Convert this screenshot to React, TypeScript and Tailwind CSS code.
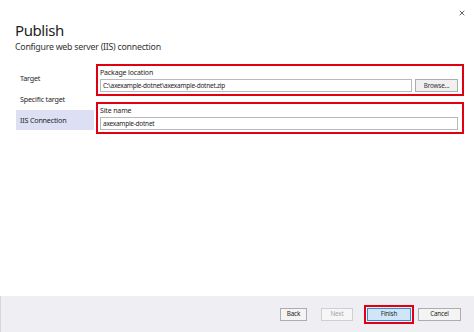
import { X } from 'lucide-react';

const navItems = ['Target', 'Specific target', 'IIS Connection'];

export default function App() {
    const font = { fontFamily: '"Noto Sans", "Open Sans", sans-serif' };

    return (
        <div className="w-[474px] h-[332px] bg-white flex flex-col overflow-hidden text-[#1e1e1e]" style={font}>
            {/* Header */}
            <div className="relative h-[62px] pl-[15px] pt-[20px]">
                <h1 className="text-[15px] leading-[20px] tracking-[-0.4px] font-normal">Publish</h1>
                <p className="text-[8.8px] leading-[12px] mt-[1px] tracking-[-0.25px] text-[#333]">Configure web server (IIS) connection</p>
                <X className="absolute right-[8px] top-[9px] text-[#444]" size={8} strokeWidth={2.5} />
            </div>

            {/* Body */}
            <div className="flex flex-1 gap-[2px] pt-[2px]">
                {/* Sidebar */}
                <div className="w-[78px] ml-[16px] flex flex-col pt-[4px]">
                    {navItems.map((item) => (
                        <div
                            key={item}
                            className={`h-[20px] pl-[4px] flex items-center text-[7.2px] tracking-[-0.2px] mb-[1px] ${item === 'IIS Connection' ? 'bg-[#dde0f4]' : ''}`}
                        >
                            {item}
                        </div>
                    ))}
                </div>

                {/* Form */}
                <div className="w-[368px] flex flex-col gap-[6px]">
                    <div className="border-2 border-[#e00012] pl-[2px] pr-[4px] pt-[1px] pb-[2px]">
                        <div className="text-[7px] leading-[12px] tracking-[-0.15px]">Package location</div>
                        <div className="flex gap-[3px] items-center">
                            <div className="flex-1 h-[13px] border border-[#b9b9b9] bg-white px-[2px] flex items-center text-[6.5px] tracking-[-0.25px]">
                                C:\axexample-dotnet\axexample-dotnet.zip
                            </div>
                            <button className="w-[43px] h-[13px] border border-[#adadad] bg-[#f0f0f0] text-[6.3px] tracking-[-0.15px] text-[#333] flex items-center justify-center">
                                Browse...
                            </button>
                        </div>
                    </div>
                    <div className="border-2 border-[#e00012] pl-[2px] pr-[4px] pt-[1px] pb-[2px]">
                        <div className="text-[7px] leading-[12px] tracking-[-0.15px]">Site name</div>
                        <div className="h-[13px] border border-[#b9b9b9] bg-white px-[2px] flex items-center text-[6.5px] tracking-[-0.25px]">
                            axexample-dotnet
                        </div>
                    </div>
                </div>
            </div>

            {/* Footer */}
            <div className="h-[36px] bg-[#eeeef3] border-l border-[#d8d8dc] flex items-center justify-end pr-[13px] gap-[4px] text-[6.3px] tracking-[-0.15px]">
                <button className="w-[27px] h-[13px] border border-[#adadad] bg-[#f4f4f4] flex items-center justify-center">Back</button>
                <button className="w-[32px] h-[13px] border border-[#cfcfcf] bg-[#f6f6f6] text-[#a8a8a8] flex items-center justify-center ml-[10px]">Next</button>
                <div className="border-2 border-[#e00012] p-px ml-[7px]">
                    <button className="w-[44px] h-[13px] border border-[#3a8bd6] bg-[#cfe6f9] flex items-center justify-center">Finish</button>
                </div>
                <button className="w-[43px] h-[13px] border border-[#adadad] bg-[#f4f4f4] flex items-center justify-center">Cancel</button>
            </div>
        </div>
    );
}
